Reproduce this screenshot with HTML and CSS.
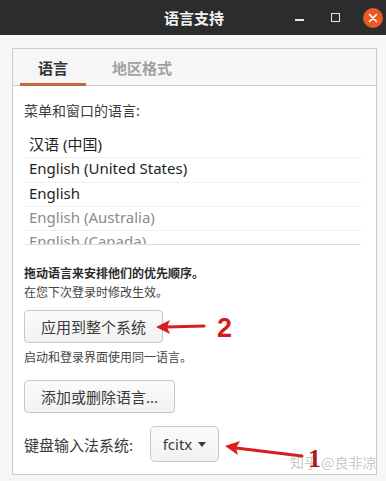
FILE: index.html
```html
<!DOCTYPE html>
<html lang="zh-CN">
<head>
    <meta charset="UTF-8">
    <meta name="viewport" content="width=device-width, initial-scale=1.0">
    <title>语言支持</title>
    <link rel="stylesheet" href="styles.css">
</head>
<body>
    <div class="window">
        <div class="titlebar">
            <span class="title">语言支持</span>
            <div class="controls">
                <span class="ctl-min"></span>
                <span class="ctl-max"></span>
                <span class="ctl-close">
                    <svg width="10" height="10" viewBox="0 0 10 10"><path d="M1.5 1.5 L8.5 8.5 M8.5 1.5 L1.5 8.5" stroke="#fff" stroke-width="1.6" stroke-linecap="round"/></svg>
                </span>
            </div>
        </div>

        <div class="content">
            <div class="notebook">
                <div class="tabs">
                    <div class="tab active">语言</div>
                    <div class="tab">地区格式</div>
                </div>

                <div class="page">
                    <div class="label">菜单和窗口的语言:</div>

                    <ul class="lang-list">
                        <li>汉语 (中国)</li>
                        <li>English (United States)</li>
                        <li>English</li>
                        <li class="dim">English (Australia)</li>
                        <li class="dim">English (Canada)</li>
                    </ul>

                    <p class="hint-bold">拖动语言来安排他们的优先顺序。</p>
                    <p class="hint">在您下次登录时修改生效。</p>

                    <button class="btn btn-apply">应用到整个系统</button>
                    <p class="hint hint-after">启动和登录界面使用同一语言。</p>

                    <button class="btn btn-add">添加或删除语言...</button>

                    <div class="im-row">
                        <span class="im-label">键盘输入法系统:</span>
                        <button class="btn btn-combo">fcitx <span class="caret"></span></button>
                    </div>
                </div>
            </div>
        </div>

        <!-- annotations drawn over the screenshot -->
        <svg class="marks" width="386" height="481" viewBox="0 0 386 481">
            <path d="M204 326 L166 327" stroke="#d81e1e" stroke-width="3" stroke-linecap="round"/>
            <path d="M156 327 L170 320 L167 327 L170 334 Z" fill="#d81e1e"/>
            <path d="M302 456 L236 448" stroke="#d81e1e" stroke-width="3" stroke-linecap="round"/>
            <path d="M225 446 L240 441 L236 448 L238 455 Z" fill="#d81e1e"/>
        </svg>
        <span class="num num-2">2</span>
        <span class="watermark">知乎 @良非凉</span>
        <span class="num num-1">1</span>
    </div>
</body>
</html>
```

FILE: styles.css
```css
* {
    margin: 0;
    padding: 0;
    box-sizing: border-box;
}

body {
    font-family: "Noto Sans", "Noto Sans CJK SC", sans-serif;
    background: #f6f6f6;
    width: 386px;
    height: 481px;
    overflow: hidden;
}

.window {
    position: relative;
    width: 386px;
    height: 481px;
}

.titlebar {
    height: 35px;
    background: #2c2c2c;
    display: flex;
    align-items: center;
    justify-content: center;
    position: relative;
}

.title {
    color: #f2f2f2;
    font-family: "Noto Sans CJK SC", sans-serif;
    font-weight: 700;
    font-size: 15px;
    margin-left: 2px;
}

.controls {
    position: absolute;
    right: 3px;
    top: 0;
    height: 35px;
    display: flex;
    align-items: center;
}

.ctl-min {
    width: 9px;
    height: 2px;
    background: #e8e8e8;
    margin-top: 5px;
    margin-right: 27px;
}

.ctl-max {
    width: 9px;
    height: 9px;
    border: 1.5px solid #e8e8e8;
    margin-right: 23px;
}

.ctl-close {
    width: 20px;
    height: 20px;
    border-radius: 50%;
    background: #e95a25;
    display: flex;
    align-items: center;
    justify-content: center;
}

.content {
    padding: 13px 9px 6px 12px;
}

.notebook {
    border: 1px solid #cbcbcb;
    background: #ffffff;
    height: 427px;
}

.tabs {
    height: 37px;
    background: #f6f6f6;
    border-bottom: 1px solid #cdcdcd;
    display: flex;
    padding-left: 7px;
}

.tab {
    font-family: "Noto Sans CJK SC", sans-serif;
    font-size: 15px;
    font-weight: 700;
    color: #a0a0a0;
    padding: 0 18px;
    display: flex;
    align-items: center;
    padding-top: 2px;
    border-bottom: 3px solid transparent;
    margin-bottom: -1px;
}

.tab.active {
    color: #333333;
    border-bottom-color: #c4673c;
}

.tab + .tab {
    padding-left: 26px;
}

.page {
    padding: 15px 15px 0 11px;
}

.label {
    font-size: 14px;
    color: #3c3c3c;
    line-height: 20px;
}

.lang-list {
    list-style: none;
    margin-top: 13px;
    margin-left: 1px;
    width: 336px;
    height: 111px;
    overflow: hidden;
    border-bottom: 1px solid #dcdcdc;
}

.lang-list li {
    height: 24.3px;
    line-height: 18px;
    padding: 1px 0 0 4px;
    font-size: 15px;
    color: #1e1e1e;
    border-bottom: 1px solid #f0f0f0;
}

.lang-list li.dim {
    color: #8c8c8c;
}

.hint-bold {
    font-size: 12px;
    font-weight: 700;
    color: #2a2a2a;
    margin-top: 20px;
    line-height: 18px;
}

.hint {
    font-size: 12px;
    color: #444444;
    line-height: 18px;
    margin-top: 1px;
}

.hint-after {
    margin-top: 6px;
}

.btn {
    font-family: "Noto Sans", "Noto Sans CJK SC", sans-serif;
    font-size: 15px;
    color: #3a3a3a;
    background: linear-gradient(#fbfbfb, #f2f2f2);
    border: 1px solid #c7c7c7;
    border-radius: 4px;
    display: flex;
    align-items: center;
    justify-content: center;
}

.btn-apply {
    width: 139px;
    height: 33px;
    margin-top: 8px;
}

.btn-add {
    width: 151px;
    height: 33px;
    margin-top: 13px;
}

.im-row {
    display: flex;
    align-items: center;
    margin-top: 13px;
}

.im-label {
    font-size: 15px;
    color: #3a3a3a;
    width: 126px;
}

.btn-combo {
    width: 69px;
    height: 36px;
    gap: 6px;
    border-radius: 5px;
}

.caret {
    width: 0;
    height: 0;
    border-left: 4.5px solid transparent;
    border-right: 4.5px solid transparent;
    border-top: 5px solid #3a3a3a;
    margin-top: 1px;
}

.marks {
    position: absolute;
    left: 0;
    top: 0;
    pointer-events: none;
}

.num {
    position: absolute;
    font-family: "Liberation Sans", sans-serif;
    font-weight: 700;
    color: #d21c1c;
}

.num-2 {
    left: 217px;
    top: 313px;
    font-size: 27px;
}

.num-1 {
    left: 308px;
    top: 444px;
    font-size: 26px;
    font-family: "Liberation Serif", serif;
    color: #b31616;
}

.watermark {
    position: absolute;
    left: 290px;
    top: 452px;
    font-family: "Noto Sans CJK SC", sans-serif;
    font-size: 14px;
    color: rgba(150, 150, 150, 0.55);
}
```
